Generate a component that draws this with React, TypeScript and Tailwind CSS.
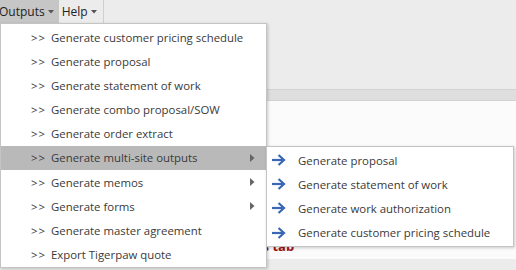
import React from "react";

const mainItems: { label: string; sub?: boolean; active?: boolean }[] = [
  { label: "Generate customer pricing schedule" },
  { label: "Generate proposal" },
  { label: "Generate statement of work" },
  { label: "Generate combo proposal/SOW" },
  { label: "Generate order extract" },
  { label: "Generate multi-site outputs", sub: true, active: true },
  { label: "Generate memos", sub: true },
  { label: "Generate forms", sub: true },
  { label: "Generate master agreement" },
  { label: "Export Tigerpaw quote" },
];

const subItems = [
  "Generate proposal",
  "Generate statement of work",
  "Generate work authorization",
  "Generate customer pricing schedule",
];

function Caret() {
  return (
    <svg width="6" height="4" viewBox="0 0 6 4" className="ml-[3px] mt-[1px]">
      <path d="M0 0 L6 0 L3 3.5 Z" fill="#555" />
    </svg>
  );
}

function SubTri() {
  return (
    <svg width="5" height="8" viewBox="0 0 5 8">
      <path d="M0 0 L4.5 4 L0 8 Z" fill="#666" />
    </svg>
  );
}

function BlueArrow() {
  return (
    <svg width="15" height="12" viewBox="0 0 15 12">
      <path d="M1 6 H12.5" stroke="#3a67b3" strokeWidth="2.2" fill="none" />
      <path d="M7.5 1 L13 6 L7.5 11" stroke="#3a67b3" strokeWidth="2.2" fill="none" />
    </svg>
  );
}

export default function App() {
  return (
    <div
      className="relative w-[516px] h-[270px] overflow-hidden bg-[#ececec] text-[#333]"
      style={{ fontFamily: '"Open Sans", "Noto Sans", sans-serif' }}
    >
      {/* top menu bar */}
      <div className="flex h-[23px] items-stretch text-[12px] text-[#222]">
        <div className="flex items-center bg-[#c6c6c6] pr-[5px] -ml-[1px]">
          <span>Outputs</span>
          <Caret />
        </div>
        <div className="flex items-center pl-[3px] pr-[6px] border-r border-[#cfcfcf]">
          <span>Help</span>
          <Caret />
        </div>
      </div>

      {/* page background */}
      <div className="h-[66px]" />
      <div className="h-[12px] bg-[#dedede] border-y border-[#d2d2d2]" />
      <div className="h-[158px] bg-[#fbfbfb] pl-[180px] pt-[132px]">
        <span className="text-[13px] font-bold text-[#a01010]">Go to outputs tab</span>
      </div>

      {/* main dropdown */}
      <div className="absolute left-0 top-[23px] w-[267px] h-[245px] bg-white border border-[#c4c4c4] shadow-[1px_1px_3px_rgba(0,0,0,0.2)] pt-[1px] text-[11.4px] text-[#3a3a3a]">
        {mainItems.map((it) => (
          <div
            key={it.label}
            className={`flex items-center h-[24.2px] pl-[30px] pr-[8px] ${it.active ? "bg-[#b9b9b9]" : ""}`}
          >
            <span className="w-[20px] tracking-[1px]">&gt;&gt;</span>
            <span className="flex-1">{it.label}</span>
            {it.sub && (
              <span className="mr-[3px] flex items-center">
                <SubTri />
              </span>
            )}
          </div>
        ))}
      </div>

      {/* submenu */}
      <div className="absolute left-[266px] top-[146px] w-[248px] h-[101px] bg-white border border-[#c4c4c4] shadow-[1px_1px_3px_rgba(0,0,0,0.2)] pt-[1px] text-[11.4px] text-[#3a3a3a]">
        {subItems.map((s) => (
          <div key={s} className="flex items-center h-[24.2px] pl-[4px]">
            <span className="w-[27px] flex items-center">
              <BlueArrow />
            </span>
            <span>{s}</span>
          </div>
        ))}
      </div>
    </div>
  );
}
